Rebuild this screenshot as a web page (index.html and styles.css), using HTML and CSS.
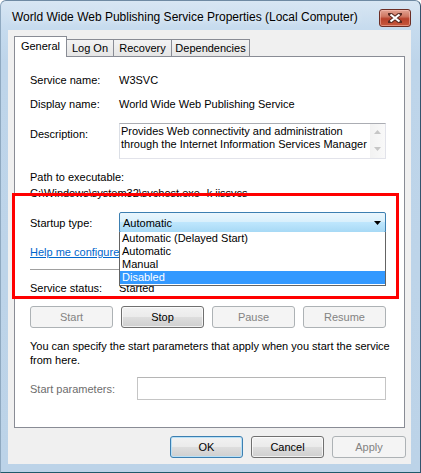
FILE: index.html
```html
<!DOCTYPE html>
<html>
<head>
<meta charset="utf-8">
<title>World Wide Web Publishing Service Properties</title>
<link rel="stylesheet" href="styles.css">
</head>
<body>
<div class="window">
  <div class="titlebar">
    <span class="title">World Wide Web Publishing Service Properties (Local Computer)</span>
    <div class="close">
      <svg width="14" height="10" viewBox="0 0 14 10"><path d="M2 1 L12 9 M12 1 L2 9" stroke="#5a2a22" stroke-width="4" stroke-linecap="square"/><path d="M2.5 1.5 L11.5 8.5 M11.5 1.5 L2.5 8.5" stroke="#ffffff" stroke-width="2.2"/></svg>
    </div>
  </div>
  <div class="client">
    <div class="tabs">
      <div class="tab tab-active tab-general">General</div>
      <div class="tab tab-logon">Log On</div>
      <div class="tab tab-recovery">Recovery</div>
      <div class="tab tab-deps">Dependencies</div>
    </div>
    <div class="panel">
      <div class="row row-1">
        <span class="label">Service name:</span><span class="value">W3SVC</span>
      </div>
      <div class="row row-2">
        <span class="label">Display name:</span><span class="value">World Wide Web Publishing Service</span>
      </div>
      <div class="row row-desc">
        <span class="label label-top">Description:</span>
        <div class="descbox">
          <div class="desctext">Provides Web connectivity and administration through the Internet Information Services Manager</div>
          <div class="vscroll">
            <svg width="7" height="4" viewBox="0 0 7 4"><path d="M0 4 L3.5 0 L7 4 Z" fill="#c6c6c6"/></svg>
            <svg width="7" height="4" viewBox="0 0 7 4"><path d="M0 0 L3.5 4 L7 0 Z" fill="#c6c6c6"/></svg>
          </div>
        </div>
      </div>
      <div class="pathblock">
        <div>Path to executable:</div>
        <div>C:\Windows\system32\svchost.exe -k iissvcs</div>
      </div>
      <div class="row row-startup">
        <span class="label">Startup type:</span>
        <div class="combo">
          <span>Automatic</span>
          <svg width="7" height="4" viewBox="0 0 7 4"><path d="M0 0 L7 0 L3.5 4 Z" fill="#000"/></svg>
          <ul class="droplist">
            <li>Automatic (Delayed Start)</li>
            <li>Automatic</li>
            <li>Manual</li>
            <li class="selected">Disabled</li>
          </ul>
        </div>
      </div>
      <div class="row row-help">
        <div class="linkclip"><a class="link" href="#">Help me configure service startup options.</a></div>
      </div>
      <div class="separator"></div>
      <div class="row row-status">
        <span class="label">Service status:</span><span class="value">Started</span>
      </div>
      <div class="svcbuttons">
        <div class="btn btn-disabled">Start</div>
        <div class="btn">Stop</div>
        <div class="btn btn-disabled">Pause</div>
        <div class="btn btn-disabled">Resume</div>
      </div>
      <p class="note">You can specify the start parameters that apply when you start the service from here.</p>
      <div class="row row-params">
        <span class="label label-params">Start parameters:</span>
        <div class="paraminput"></div>
      </div>
    </div>
    <div class="actions">
      <div class="btn btn-dlg btn-default">OK</div>
      <div class="btn btn-dlg">Cancel</div>
      <div class="btn btn-dlg btn-disabled">Apply</div>
    </div>
  </div>
  <div class="highlight"></div>
</div>
</body>
</html>
```

FILE: styles.css
```css
* { box-sizing: border-box; }
html, body { margin: 0; padding: 0; }
body {
  width: 421px;
  height: 473px;
  background: #ffffff;
  font-family: "Liberation Sans", Arial, sans-serif;
  font-size: 11px;
  color: #000;
  overflow: hidden;
}
.window {
  position: relative;
  width: 421px;
  height: 473px;
  border: 1px solid #34536e;
  border-left-color: #8fa9c0;
  border-top-color: #6f8aa3;
  border-bottom-color: #1f5a6a;
  border-radius: 6px 6px 0 0;
  background: linear-gradient(#d8e6f3 0px, #c6dbee 28px, #bed5ea 60px, #bcd3e8 100%);
  padding: 0 9px 8px 7px;
  display: flex;
  flex-direction: column;
}
.titlebar {
  height: 29px;
  display: flex;
  align-items: flex-start;
  justify-content: space-between;
}
.title {
  font-family: "Liberation Sans", Arial, sans-serif;
  font-size: 12px;
  margin-top: 9px;
  padding-left: 4px;
  color: #000;
  text-shadow: 0 0 6px rgba(255,255,255,0.9);
}
.close {
  margin-top: 8px;
  width: 32px;
  height: 18px;
  border: 1px solid #6c2e25;
  border-radius: 3px;
  background: linear-gradient(#e3a393 0%, #cf7762 40%, #b8412b 55%, #c75a3e 100%);
  display: flex;
  align-items: center;
  justify-content: center;
  box-shadow: inset 0 0 0 1px rgba(255,200,190,0.5);
}
.client {
  width: 403px;
  height: 434px;
  background: #f0f0f0;
  display: flex;
  flex-direction: column;
}
.tabs {
  display: flex;
  align-items: flex-end;
  height: 21px;
  margin-top: 6px;
  padding-left: 6px;
  position: relative;
  z-index: 2;
}
.tab {
  height: 18px;
  border: 1px solid #898c95;
  background: linear-gradient(#f3f3f3, #e5e5e5);
  margin-left: -1px;
  text-align: center;
  line-height: 17px;
  white-space: nowrap;
}
.tab-active {
  height: 21px;
  background: #ffffff;
  border-bottom: none;
  margin-left: 0;
  line-height: 18px;
  position: relative;
  z-index: 1;
}
.tab-general { width: 53px; }
.tab-logon { width: 48px; }
.tab-recovery { width: 59px; }
.tab-deps { width: 79px; }
.panel {
  margin-left: 6px;
  margin-top: -1px;
  width: 391px;
  height: 372px;
  border: 1px solid #898c95;
  background: #ffffff;
  padding: 13px 18px 0 15px;
  position: relative;
  z-index: 1;
}
.row {
  display: flex;
  align-items: center;
  height: 20px;
}
.label {
  width: 89px;
  flex: none;
  white-space: nowrap;
}
.value { white-space: nowrap; }
.row-2 { margin-top: 4px; }
.row-desc {
  margin-top: 9px;
  height: 36px;
  align-items: flex-start;
}
.label-top { padding-top: 5px; }
.descbox {
  width: 267px;
  height: 36px;
  border: 1px solid #e2e3ea;
  border-top-color: #abadb3;
  border-left-color: #dbdfe6;
  display: flex;
}
.desctext {
  flex: 1;
  padding: 1px 0 0 1px;
  line-height: 13px;
}
.vscroll {
  width: 15px;
  background: linear-gradient(90deg, #f2f2f2, #f9f9f9);
  display: flex;
  flex-direction: column;
  justify-content: space-between;
  align-items: center;
  padding: 6px 0 7px;
}
.pathblock {
  margin-top: 10px;
  line-height: 16px;
  white-space: nowrap;
}
.row-startup {
  margin-top: 11px;
  height: 21px;
}
.combo {
  position: relative;
  width: 267px;
  height: 21px;
  border: 1px solid #3c7fb1;
  border-radius: 2px;
  background: linear-gradient(#eaf6fd 0%, #d9f0fc 45%, #bee6fd 50%, #a7d9f5 100%);
  display: flex;
  align-items: center;
  justify-content: space-between;
  padding: 0 4px 0 3px;
  z-index: 3;
}
.droplist {
  position: absolute;
  left: -1px;
  top: 19px;
  width: 267px;
  margin: 0;
  padding: 0;
  list-style: none;
  background: #ffffff;
  border: 1px solid #646464;
  border-top: none;
  padding-bottom: 1px;
}
.droplist li {
  height: 13px;
  line-height: 13px;
  padding-left: 2px;
  white-space: nowrap;
}
.droplist li.selected {
  background: #3399ff;
  color: #ffffff;
}
.row-help { margin-top: 9px; }
.linkclip {
  width: 89px;
  overflow: hidden;
  white-space: nowrap;
}
.link {
  color: #0066cc;
  text-decoration: underline;
  white-space: nowrap;
}
.separator {
  margin-top: 7px;
  height: 1px;
  width: 355px;
  background: #a0a0a0;
}
.row-status { margin-top: 8px; }
.svcbuttons {
  margin-top: 8px;
  display: grid;
  grid-template-columns: repeat(4, 1fr);
  column-gap: 8px;
  width: 356px;
}
.btn {
  height: 22px;
  border: 1px solid #707070;
  border-radius: 3px;
  background: linear-gradient(#f2f2f2 0%, #ebebeb 48%, #dddddd 52%, #cfcfcf 100%);
  box-shadow: inset 0 0 0 1px rgba(255,255,255,0.7);
  display: flex;
  align-items: center;
  justify-content: center;
  white-space: nowrap;
}
.btn-disabled {
  border-color: #adb2b5;
  background: #f4f4f4;
  color: #838383;
  box-shadow: none;
}
.note {
  margin: 11px -15px 0 0;
  line-height: 14px;
}
.row-params {
  margin-top: 10px;
  height: 23px;
}
.label-params {
  width: 107px;
  color: #6d6d6d;
}
.paraminput {
  width: 249px;
  height: 23px;
  border: 1px solid #c5c5c5;
  border-top-color: #b5b5b5;
  background: #ffffff;
}
.actions {
  margin-top: 8px;
  display: flex;
  justify-content: flex-end;
  gap: 8px;
  padding-right: 5px;
}
.btn-dlg { width: 73px; }
.btn-dlg.btn-disabled { width: 74px; }
.btn-default {
  border-color: #3c7fb1;
  box-shadow: inset 0 0 0 1px #b8e0f6;
}
.highlight {
  position: absolute;
  left: 11px;
  top: 192px;
  width: 387px;
  height: 106px;
  border: 3px solid #ff0000;
  z-index: 10;
  pointer-events: none;
}
```
